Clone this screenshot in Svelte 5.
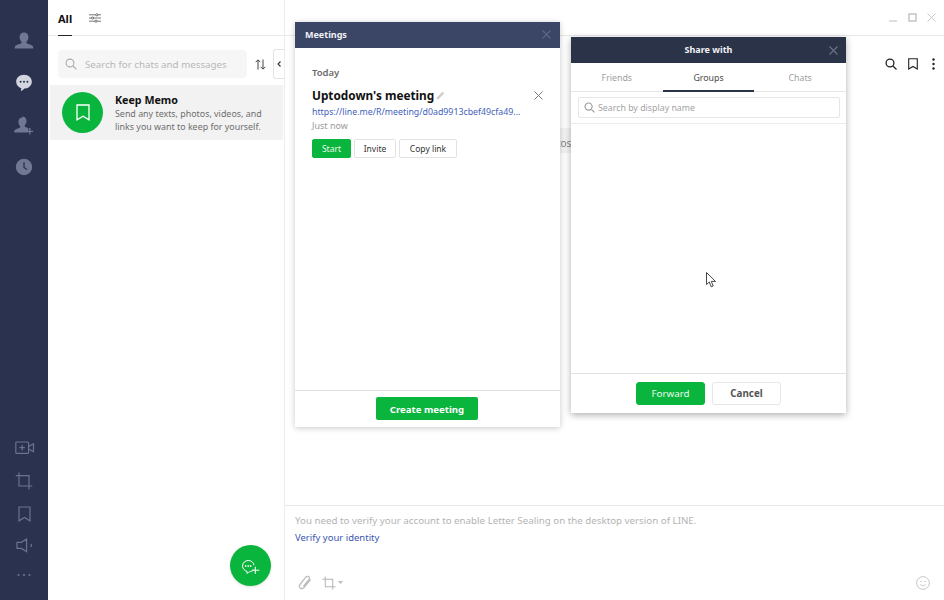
<script>
  const tabs = [
    { label: 'Friends', on: false },
    { label: 'Groups', on: true },
    { label: 'Chats', on: false }
  ];
</script>

<div class="app">
  <nav class="rail">
    <div class="rail-top">
      <svg width="20" height="20" viewBox="0 0 20 20"><path d="M10 1.500c2.800 0 4.400 2 4.400 4.800 0 2-.9 3.700-2 4.600v1.200c0 .7 5.800 1.600 6.600 3.300.3.700.3 2.100.3 2.100H.7s0-1.400.3-2.100c.8-1.700 6.600-2.600 6.600-3.300v-1.200c-1.100-.9-2-2.600-2-4.600C5.600 3.500 7.200 1.500 10 1.500z" fill="#6f7792"/></svg>
      <svg width="20" height="20" viewBox="0 0 20 20"><path d="M10 1.800c4.600 0 7.800 2.900 7.800 6.900 0 3.900-3.200 6.800-7.500 6.900-.5.700-2 2.100-3 2.500-.4.100-.4-.3-.3-.7l.3-2.200c-3-1-5.100-3.400-5.100-6.500 0-4 3.200-6.900 7.800-6.900z" fill="#d3d6df"/><circle cx="6.600" cy="8.800" r="1" fill="#2a3250"/><circle cx="10" cy="8.800" r="1" fill="#2a3250"/><circle cx="13.400" cy="8.800" r="1" fill="#2a3250"/></svg>
      <svg width="20" height="20" viewBox="0 0 20 20"><path d="M8.500 1.500c2.500 0 4 1.900 4 4.500 0 1.800-.8 3.400-1.800 4.200v1.100c0 .7 2.400 1.100 3.600 2v4.200H.2s0-1.300.3-2c.7-1.500 5.700-2.500 5.700-3.200v-1.100c-1-.8-1.800-2.400-1.800-4.200 0-2.600 1.500-4.500 4.100-4.500z" fill="#6f7792"/><path d="M15.800 13v6.500M12.600 16.300h6.600" stroke="#6f7792" stroke-width="1.300" fill="none"/></svg>
      <svg width="20" height="20" viewBox="0 0 20 20"><circle cx="10" cy="10" r="8.200" fill="#6f7792"/><path d="M10 5.300V10.500l3 2" stroke="#2a3250" stroke-width="1.300" fill="none"/></svg>
    </div>
    <div class="rail-bottom">
      <svg width="20" height="16" viewBox="0 0 20 16" fill="none" stroke="#6a7290" stroke-width="1.200"><rect x=".8" y="2" width="12.800" height="11.400" rx="1"/><path d="M7.200 5v5.400M4.500 7.700h5.400M13.600 6.500l4.900-2.800v8l-4.900-2.800"/></svg>
      <svg width="18" height="18" viewBox="0 0 18 18" fill="none" stroke="#6a7290" stroke-width="1.200"><path d="M4 .5V14h13.300M.8 3.700H14V17.500"/></svg>
      <svg width="13" height="16" viewBox="0 0 13 16" fill="none" stroke="#6a7290" stroke-width="1.200"><path d="M1 1h11v13.800l-5.500-3.400L1 14.800z"/></svg>
      <svg width="17" height="15" viewBox="0 0 17 15" fill="none" stroke="#6a7290" stroke-width="1.200"><path d="M1 4.300h4.400L10.600 1v12.600L5.400 10.400H1zM14.800 6l.8 1.500-.8 1.500"/></svg>
      <svg class="dots" width="14" height="4" viewBox="0 0 14 4" fill="#6a7290"><circle cx="1.500" cy="2" r="1.100"/><circle cx="7" cy="2" r="1.100"/><circle cx="12.500" cy="2" r="1.100"/></svg>
    </div>
  </nav>

  <aside class="list">
    <header class="list-head">
      <span class="all">All</span>
      <svg width="12" height="10" viewBox="0 0 12 10" fill="none" stroke="#666" stroke-width=".9"><path d="M0 1.800h12M0 5h12M0 8.200h12"/><circle cx="7.800" cy="1.800" r="1.100" fill="#fff"/><circle cx="3.600" cy="5" r="1.100" fill="#fff"/><circle cx="7" cy="8.200" r="1.100" fill="#fff"/></svg>
    </header>
    <div class="search-row">
      <div class="search">
        <svg width="12" height="12" viewBox="0 0 12 12" fill="none" stroke="#aaa" stroke-width="1.100"><circle cx="5" cy="5" r="3.900"/><path d="M8 8l3.400 3.400"/></svg>
        <span>Search for chats and messages</span>
      </div>
      <svg class="sort" width="11" height="11" viewBox="0 0 11 11" fill="none" stroke="#444" stroke-width="1"><path d="M3 10.500V1M.7 3.200L3 .8l2.300 2.400M8 .5V10M5.700 7.800L8 10.200l2.300-2.400"/></svg>
      <div class="collapse"><svg width="4" height="6" viewBox="0 0 4 6" fill="none" stroke="#333" stroke-width="1.100"><path d="M3.500.5L1 3l2.500 2.500"/></svg></div>
    </div>
    <div class="memo">
      <div class="avatar">
        <svg width="14" height="17" viewBox="0 0 14 17" fill="none" stroke="#fff" stroke-width="1.300"><path d="M1 1h12v14.800l-6-3.500-6 3.500z"/></svg>
      </div>
      <div class="memo-text">
        <strong>Keep Memo</strong>
        <p>Send any texts, photos, videos, and links you want to keep for yourself.</p>
      </div>
    </div>
    <button class="fab" aria-label="New chat">
      <svg width="19" height="16" viewBox="0 0 19 16" fill="none" stroke="#fff" stroke-width="1"><path d="M12.500 10.800c-1 1.200-2.500 1.900-4.200 2-.7.700-1.700 1.500-2.400 1.500l.2-1.900C3.700 11.700 1.500 9.700 1.500 7 1.500 3.700 4.200 1.500 7.300 1.500c3 0 5.500 2 5.700 4.700"/><circle cx="4.700" cy="7" r=".5" fill="#fff"/><circle cx="7.200" cy="7" r=".5" fill="#fff"/><circle cx="9.700" cy="7" r=".5" fill="#fff"/><path d="M14.300 7.700v7M10.800 11.200h7.500" stroke-width="1.100"/></svg>
    </button>
  </aside>

  <main class="chat">
    <div class="win-bar">
      <svg width="9" height="9" viewBox="0 0 9 9" stroke="#c8c8c8" stroke-width="1.200" fill="none"><path d="M0 8h8"/></svg>
      <svg width="9" height="9" viewBox="0 0 9 9" stroke="#c0c0c0" stroke-width="1.400" fill="none"><rect x="1" y="1" width="7" height="7"/></svg>
      <svg width="9" height="9" viewBox="0 0 9 9" stroke="#c8c8c8" stroke-width="1" fill="none"><path d="M.5.500l8 8M8.500.500l-8 8"/></svg>
    </div>
    <div class="chat-tools">
      <svg width="12" height="12" viewBox="0 0 12 12" fill="none" stroke="#222" stroke-width="1.300"><circle cx="5" cy="5" r="3.900"/><path d="M8 8l3.500 3.500"/></svg>
      <svg class="t-mark" width="10" height="12" viewBox="0 0 10 12" fill="none" stroke="#222" stroke-width="1.100"><path d="M.7.700h8.600v10.300L5 8.500.7 11z"/></svg>
      <svg class="t-more" width="3" height="12" viewBox="0 0 3 12" fill="#222"><circle cx="1.500" cy="1.500" r="1.200"/><circle cx="1.500" cy="6" r="1.200"/><circle cx="1.500" cy="10.500" r="1.200"/></svg>
    </div>
    <div class="notice"><span>Send any texts, photos, videos, and links</span></div>
    <div class="composer">
      <p class="warn">You need to verify your account to enable Letter Sealing on the desktop version of LINE.</p>
      <p class="verify">Verify your identity</p>
      <div class="composer-tools">
        <svg width="14" height="15" viewBox="0 0 14 15" fill="none" stroke="#bdbdbd" stroke-width="1.300"><path d="M12.500 4.500L6 12.500c-1 1.200-2.600 1.400-3.700.6-1.100-.9-1.200-2.400-.3-3.600L7.800 2.200C8.500 1.300 9.800 1 10.700 1.700c.9.700.9 2 .2 2.900L5.500 11.200"/></svg>
        <svg class="crop" width="14" height="14" viewBox="0 0 15 15" fill="none" stroke="#b5b5b5" stroke-width="1.100"><path d="M3.500.5V11.500H14.500M.5 3.500h11v11"/></svg>
        <svg class="caret" width="5" height="3" viewBox="0 0 5 3" fill="#bbb"><path d="M0 0h5L2.500 3z"/></svg>
        <svg class="smile" width="14" height="14" viewBox="0 0 15 15" fill="none" stroke="#c2c2c2" stroke-width="1"><circle cx="7.500" cy="7.500" r="6.800"/><path d="M4.800 8.800c.6 1.200 1.500 1.700 2.700 1.700s2.100-.5 2.700-1.700"/><circle cx="5.400" cy="5.800" r=".4"/><circle cx="9.600" cy="5.800" r=".4"/></svg>
      </div>
    </div>
  </main>

  <section class="dlg meetings">
    <header class="m-head">
      <span>Meetings</span>
      <svg width="9" height="9" viewBox="0 0 9 9" stroke="#5c6784" stroke-width="1.100" fill="none"><path d="M.5.500l8 8M8.500.500l-8 8"/></svg>
    </header>
    <div class="m-body">
      <div class="today">Today</div>
      <div class="m-title">
        <span>Uptodown's meeting</span>
        <svg class="pen" width="9" height="9" viewBox="0 0 9 9" fill="#cfcfcf"><path d="M6.500.8l1.700 1.700L2.800 8 .6 8.400 1 6.200z"/></svg>
        <svg class="m-x" width="9" height="9" viewBox="0 0 9 9" stroke="#777" stroke-width="1" fill="none"><path d="M.5.500l8 8M8.500.500l-8 8"/></svg>
      </div>
      <div class="m-link">https://line.me/R/meeting/d0ad9913cbef49cfa49...</div>
      <div class="m-time">Just now</div>
      <div class="m-btns">
        <button class="small green">Start</button>
        <button class="small invite">Invite</button>
        <button class="small copy">Copy link</button>
      </div>
    </div>
    <footer class="m-foot"><button class="create">Create meeting</button></footer>
  </section>

  <section class="dlg share">
    <header class="s-head">
      <span>Share with</span>
      <svg width="9" height="9" viewBox="0 0 9 9" stroke="#6a7286" stroke-width="1.100" fill="none"><path d="M.5.500l8 8M8.500.500l-8 8"/></svg>
    </header>
    <div class="tabs">
      {#each tabs as t}
        <div class="tab" class:on={t.on}>{t.label}</div>
      {/each}
    </div>
    <div class="s-search">
      <div class="s-input">
        <svg width="11" height="11" viewBox="0 0 12 12" fill="none" stroke="#999" stroke-width="1.200"><circle cx="5" cy="5" r="3.900"/><path d="M8 8l3.400 3.400"/></svg>
        <span>Search by display name</span>
      </div>
    </div>
    <div class="s-empty"></div>
    <footer class="s-foot">
      <button class="act green">Forward</button>
      <button class="act">Cancel</button>
    </footer>
  </section>

  <svg class="cursor" width="11" height="16" viewBox="0 0 11 16"><path d="M.5.500V12.500L3.300 10l1.900 4.800 2-.8L5.300 9.400h4.200z" fill="#fff" stroke="#333" stroke-width=".9"/></svg>
</div>

<style>
  :global(body) { margin: 0; background: #fff; }
  .app {
    position: relative;
    display: flex;
    width: 944px;
    height: 600px;
    overflow: hidden;
    font-family: "Noto Sans", "Open Sans", sans-serif;
    font-size: 10px;
    color: #222;
  }
  .rail {
    width: 48px;
    flex: none;
    background: #2a3250;
    display: flex;
    flex-direction: column;
    justify-content: space-between;
    align-items: center;
  }
  .rail-top { display: flex; flex-direction: column; align-items: center; gap: 22px; padding-top: 31px; padding-right: 1px; }
  .rail-bottom { display: flex; flex-direction: column; align-items: center; gap: 16px; padding-bottom: 23px; }
  .rail-bottom svg:first-child { margin-left: 2px; }
  .dots { margin-top: 4px; }

  .list {
    position: relative;
    width: 236px;
    flex: none;
    border-right: 1px solid #ececec;
  }
  .list-head {
    height: 35px;
    border-bottom: 1px solid #e8e8e8;
    display: flex;
    align-items: center;
    gap: 17px;
    padding-left: 10px;
  }
  .all {
    position: relative;
    height: 35px;
    line-height: 37px;
    font-weight: 700;
    font-size: 11px;
    color: #111;
  }
  .all::after {
    content: "";
    position: absolute;
    left: 0;
    right: 0;
    bottom: -1px;
    height: 1.500px;
    background: #222;
  }
  .search-row { display: flex; align-items: center; padding: 13px 0 6px 10px; height: 30px; }
  .search {
    width: 189px;
    height: 28px;
    background: #f6f6f6;
    border-radius: 4px;
    display: flex;
    align-items: center;
    gap: 8px;
    padding-left: 7px;
    box-sizing: border-box;
    color: #b8b8b8;
    font-size: 9.750px;
  }
  .sort { margin-left: 8px; }
  .collapse {
    margin-left: 7px;
    width: 11px;
    height: 30px;
    border: 1px solid #e4e4e4;
    border-right: 0;
    border-radius: 3px 0 0 3px;
    box-sizing: border-box;
    display: flex;
    align-items: center;
    padding-left: 3px;
  }
  .memo {
    display: flex;
    align-items: center;
    gap: 12px;
    height: 55px;
    margin-left: 2px;
    margin-right: 1px;
    padding-left: 12px;
    background: #f2f2f2;
  }
  .avatar {
    width: 41px;
    height: 41px;
    flex: none;
    border-radius: 50%;
    background: #0ab53e;
    display: flex;
    align-items: center;
    justify-content: center;
  }
  .memo-text strong { display: block; font-size: 10.700px; line-height: 14px; font-weight: 700; color: #111; }
  .memo-text p { margin: 0; width: 160px; font-size: 8.900px; line-height: 13px; color: #6e6e6e; }
  .fab {
    position: absolute;
    left: 182px;
    top: 545px;
    width: 41px;
    height: 41px;
    border: 0;
    border-radius: 50%;
    background: #0ab53e;
    padding: 2px 0 0;
    display: flex;
    align-items: center;
    justify-content: center;
    box-shadow: 0 1px 3px rgba(0,0,0,.12);
  }

  .chat { flex: 1; min-width: 0; display: flex; flex-direction: column; }
  .win-bar {
    height: 35px;
    flex: none;
    border-bottom: 1px solid #e8e8e8;
    display: flex;
    justify-content: flex-end;
    align-items: center;
    gap: 10px;
    padding-right: 8px;
  }
  .chat-tools {
    height: 55px;
    flex: none;
    display: flex;
    justify-content: flex-end;
    align-items: center;
    padding-right: 9px;
  }
  .t-mark { margin-left: 11px; }
  .t-more { margin-left: 14px; }
  .notice {
    margin: 37px 0 0 120px;
    width: 300px;
    height: 25px;
    flex: none;
    background: #f3f3f3;
    color: #888;
    overflow: hidden;
    white-space: nowrap;
    line-height: 30px;
    font-size: 10px;
  }
  .notice span { margin-left: 60px; }
  .composer {
    margin-top: auto;
    height: 95px;
    flex: none;
    box-sizing: border-box;
    border-top: 1px solid #e8e8e8;
    padding: 7px 14px 0 10px;
    display: flex;
    flex-direction: column;
  }
  .warn { margin: 0; font-size: 9.760px; line-height: 16px; color: #b4b4b4; }
  .verify { margin: 1px 0 0; font-size: 9.500px; line-height: 16px; color: #3b56b0; }
  .composer-tools { display: flex; align-items: center; margin-top: auto; padding: 0 0 10px 3px; }
  .crop { margin-left: 10px; }
  .caret { margin-left: 2px; }
  .smile { margin-left: auto; }

  .dlg {
    position: absolute;
    background: #fff;
    display: flex;
    flex-direction: column;
    box-sizing: border-box;
  }
  .meetings { left: 295px; top: 22px; width: 265px; height: 405px; box-shadow: 0 1px 6px rgba(0,0,0,.22); }
  .m-head {
    height: 26px;
    flex: none;
    box-sizing: border-box;
    background: #3b4565;
    color: #f0f2f6;
    font-weight: 700;
    font-size: 9px;
    display: flex;
    align-items: center;
    justify-content: space-between;
    padding: 0 9px 1px 10px;
  }
  .m-body { flex: 1; padding: 18px 17px 0; }
  .today { font-size: 9.500px; line-height: 14px; font-weight: 600; color: #6b6b6b; }
  .m-title { display: flex; align-items: center; margin-top: 7px; height: 16px; }
  .m-title span { font-size: 11.800px; font-weight: 700; color: #111; }
  .pen { margin: 0 0 0 2px; }
  .m-x { margin-left: auto; }
  .m-link { margin-top: 2px; font-size: 8.800px; line-height: 14px; color: #3f62bd; white-space: nowrap; }
  .m-time { font-size: 9px; line-height: 14px; color: #9a9a9a; }
  .m-btns { display: flex; gap: 3px; margin-top: 6px; }
  button { font-family: inherit; cursor: default; }
  .small {
    height: 19px;
    padding: 0;
    background: #fff;
    border: 1px solid #e3e3e3;
    border-radius: 2px;
    font-size: 8.500px;
    color: #333;
  }
  .small.green, .act.green { background: #0ab53e; border-color: #0ab53e; color: #e8f8ec; }
  .small.green { width: 39px; }
  .small.invite { width: 42px; }
  .small.copy { width: 58px; }
  .m-foot {
    height: 37px;
    flex: none;
    box-sizing: border-box;
    border-top: 1px solid #e2e2e2;
    display: flex;
    justify-content: center;
    align-items: flex-start;
    padding: 6px 1px 0 0;
  }
  .create {
    width: 102px;
    height: 23px;
    padding: 1px 0 0;
    background: #0ab53e;
    border: 0;
    border-radius: 2px;
    color: #fff;
    font-weight: 700;
    font-size: 9.600px;
  }

  .share { left: 571px; top: 37px; width: 275px; height: 376px; box-shadow: 0 2px 7px rgba(0,0,0,.32); }
  .s-head {
    position: relative;
    height: 26px;
    flex: none;
    background: #2b3348;
    color: #f1f2f5;
    font-weight: 700;
    font-size: 9px;
    line-height: 26px;
    display: flex;
    align-items: flex-start;
    justify-content: center;
  }
  .s-head svg { position: absolute; right: 8px; top: 9px; }
  .tabs { display: flex; height: 29px; flex: none; border-bottom: 1px solid #e6e6e6; box-sizing: border-box; }
  .tab { flex: 1; text-align: center; line-height: 30px; font-size: 8.800px; color: #a0a0a0; }
  .tab.on { color: #4a4a4a; border-bottom: 2px solid #2b3348; margin-bottom: 0; height: 27px; }
  .s-search { height: 32px; flex: none; padding: 5px 6px 0 7px; box-sizing: border-box; border-bottom: 1px solid #ececec; }
  .s-input {
    height: 21px;
    border: 1px solid #e6e6e6;
    border-radius: 2px;
    box-sizing: border-box;
    display: flex;
    align-items: center;
    gap: 3px;
    padding-left: 5px;
    font-size: 8.800px;
    color: #a3a3a3;
  }
  .s-empty { flex: 1; }
  .s-foot {
    height: 40px;
    flex: none;
    border-top: 1px solid #e2e2e2;
    display: flex;
    justify-content: center;
    gap: 7px;
    padding-top: 8px;
    box-sizing: border-box;
  }
  .act {
    width: 69px;
    height: 23px;
    padding: 0 0 1px;
    background: #fff;
    border: 1px solid #e6e6e6;
    border-radius: 3px;
    font-size: 9.800px;
    font-weight: 700;
    color: #555;
  }
  .act.green { font-weight: 400; }
  .cursor { position: absolute; left: 706px; top: 272px; }
</style>
